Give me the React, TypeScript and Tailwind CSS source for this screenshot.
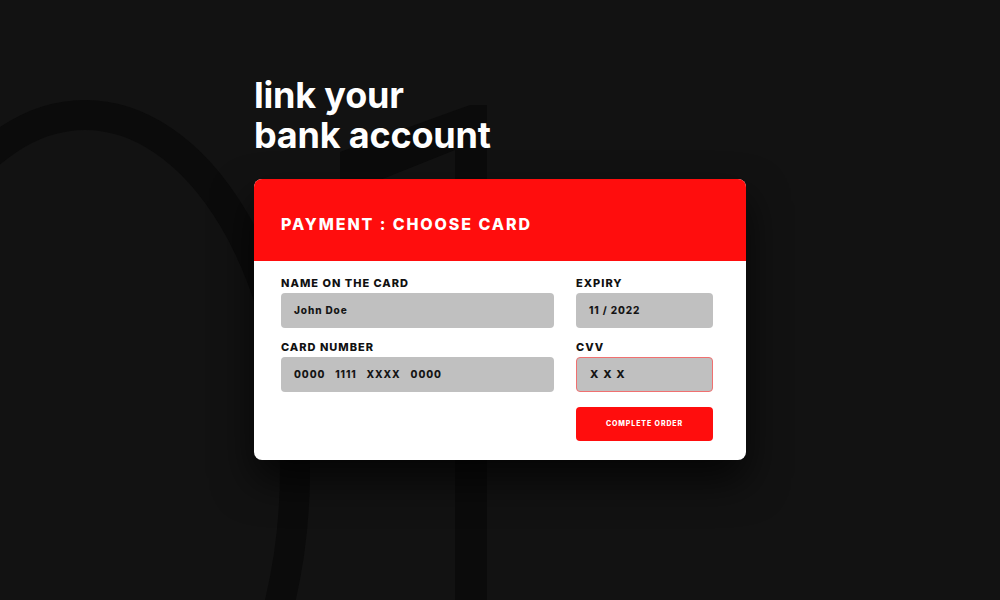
import type { FC } from 'react';

const font = { fontFamily: 'Inter, "Noto Sans", sans-serif' };

// big "01" outline behind the form
const Backdrop: FC = () => (
  <svg className="absolute inset-0" width="1000" height="600" viewBox="0 0 1000 600">
    <ellipse cx="85" cy="470" rx="210" ry="355" fill="none" stroke="#0b0b0b" strokeWidth="30" />
    <polygon points="340,152 470,105 487,105 487,600 455,600 455,150 340,196" fill="#0b0b0b" />
  </svg>
);

type FieldProps = { label: string; value: string[]; danger?: boolean; big?: boolean };

const Field: FC<FieldProps> = ({ label, value, danger, big }) => (
  <div className="flex flex-col">
    <span className="text-[11px] leading-[14px] font-extrabold tracking-[1px] text-[#111]">{label}</span>
    <div
      className={`mt-[3px] h-[35px] rounded-[4px] bg-[#c0c0c0] flex items-center gap-[10px] px-[13px] ${
        danger ? 'border border-[#f07070]' : ''
      }`}
    >
      {value.map((part, i) => (
        <span
          key={i}
          className={`whitespace-pre font-extrabold text-[#151515] ${
            big ? 'text-[11px] tracking-[1.2px]' : 'text-[10px] tracking-[0.9px]'
          }`}
        >
          {part}
        </span>
      ))}
    </div>
  </div>
);

const App: FC = () => {
  return (
    <div className="relative w-[1000px] h-[600px] overflow-hidden bg-[#121212]" style={font}>
      <Backdrop />
      <div className="relative pl-[254px] pt-[75px]">
        <h1 className="text-[36px] leading-[40px] font-bold text-white tracking-[-0.2px]">
          link your
          <br />
          bank account
        </h1>

        <div className="mt-[24px] w-[492px] rounded-[8px] overflow-hidden bg-white shadow-[0_20px_40px_rgba(0,0,0,0.7)]">
          <div className="h-[82px] bg-[#ff0d0d] flex items-center px-[27px] pt-[7px]">
            <h2 className="text-[16px] font-extrabold tracking-[1.9px] text-white">PAYMENT : CHOOSE CARD</h2>
          </div>

          <div className="grid grid-cols-[273px_137px] gap-x-[22px] gap-y-[12px] pl-[27px] pt-[15px] pb-[19px]">
            <Field label="NAME ON THE CARD" value={['John Doe']} />
            <Field label="EXPIRY" value={['11 / 2022']} />
            <Field label="CARD NUMBER" value={['0000', '1111', 'XXXX', '0000']} />
            <Field label="CVV" value={['X X X']} danger big />
            <div />
            <button className="mt-[3px] h-[34px] rounded-[4px] bg-[#ff0d0d] text-white text-[7px] font-extrabold tracking-[0.9px]">
              COMPLETE ORDER
            </button>
          </div>
        </div>
      </div>
    </div>
  );
};

export default App;
